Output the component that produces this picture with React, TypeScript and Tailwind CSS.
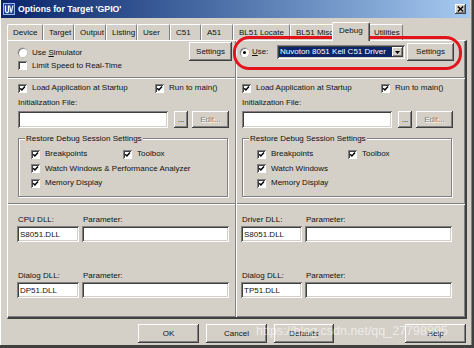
import React from "react";

const raised =
  "bg-[#d4d0c8] shadow-[inset_-1px_-1px_0_#404040,inset_1px_1px_0_#ffffff,inset_-2px_-2px_0_#808080]";
const sunken =
  "bg-white shadow-[inset_1px_1px_0_#808080,inset_-1px_-1px_0_#ffffff,inset_2px_2px_0_#404040,inset_-2px_-2px_0_#d4d0c8]";

function Check({ checked = true }: { checked?: boolean }) {
  return (
    <span className="relative inline-block w-[9px] h-[9px] shrink-0 bg-white shadow-[inset_1px_1px_0_#808080,inset_-1px_-1px_0_#ffffff,inset_2px_2px_0_#404040]">
      {checked && (
        <svg viewBox="0 0 9 9" className="absolute inset-0 w-[9px] h-[9px]">
          <path d="M2.2 4.2 L3.9 6 L7 2.6" stroke="#000" strokeWidth="1.5" fill="none" />
        </svg>
      )}
    </span>
  );
}

function Radio({ on = false }: { on?: boolean }) {
  return (
    <span className="relative inline-flex items-center justify-center w-[9px] h-[9px] shrink-0 rounded-full bg-white shadow-[inset_1px_1px_0_#808080,inset_-1px_-1px_0_#ffffff,0_0_0_0.5px_#b0aca4]">
      {on && <span className="w-[3px] h-[3px] rounded-full bg-black" />}
    </span>
  );
}

function CheckRow({ label, w }: { label: string; w?: string }) {
  return (
    <div className={`flex items-center gap-[5px] h-[12px] ${w ?? ""}`}>
      <Check />
      <span className="whitespace-nowrap">{label}</span>
    </div>
  );
}

function Btn({ children, className = "", disabled = false }: { children: React.ReactNode; className?: string; disabled?: boolean }) {
  return (
    <div className={`flex items-center justify-center shrink-0 ${raised} ${className}`}>
      <span className={disabled ? "text-[#808080] [text-shadow:1px_1px_0_#ffffff]" : ""}>{children}</span>
    </div>
  );
}

function Section2({ pl, runW, groupPl, groupCol, watch }: { pl: string; runW: string; groupPl: string; groupCol: string; watch: string }) {
  return (
    <div className={`h-[124px] flex flex-col ${pl}`}>
      <div className="flex mt-[3px]">
        <CheckRow label="Load Application at Startup" w={runW} />
        <CheckRow label="Run to main()" />
      </div>
      <div className="mt-[3px] h-[12px] flex items-center">Initialization File:</div>
      <div className="mt-[2px] flex h-[17px]">
        <div className={`w-[150px] h-[17px] ${sunken}`} />
        <Btn className="ml-[6px] w-[14px] h-[17px]">...</Btn>
        <Btn className="ml-[4px] w-[37px] h-[17px]" disabled>
          Edit...
        </Btn>
      </div>
      <div className="relative mt-[10px] w-[210px] h-[59px] border border-[#808080] shadow-[inset_1px_1px_0_#ffffff,1px_1px_0_#ffffff]">
        <span className="absolute left-[6px] top-[-6px] px-[1px] bg-[#d4d0c8] leading-[11px] whitespace-nowrap">
          Restore Debug Session Settings
        </span>
        <div className={`flex flex-col ${groupPl} pt-[9px] gap-[2.5px]`}>
          <div className="flex">
            <CheckRow label="Breakpoints" w={groupCol} />
            <CheckRow label="Toolbox" />
          </div>
          <CheckRow label={watch} />
          <CheckRow label="Memory Display" />
        </div>
      </div>
    </div>
  );
}

function Section3({ pl, l1, v1, v2, w1 }: { pl: string; l1: string; v1: string; v2: string; w1: string }) {
  const block = (label: string, val: string, top: string) => (
    <div className={`flex flex-col ${top}`}>
      <div className="flex h-[12px] items-center">
        <span className={`${w1} ml-[1px] mr-[3px]`}>{label}</span>
        <span>Parameter:</span>
      </div>
      <div className="flex h-[16px] gap-[3px]">
        <div className={`${w1} h-[16px] ${sunken} flex items-center pl-[3px] pt-[1px]`}>{val}</div>
        <div className={`w-[147px] h-[16px] ${sunken}`} />
      </div>
    </div>
  );
  return (
    <div className={`flex-1 flex flex-col ${pl}`}>
      {block(l1, v1, "mt-[9px]")}
      {block("Dialog DLL:", v2, "mt-[28px]")}
    </div>
  );
}

const Etch = () => <div className="h-[2px] border-t border-[#808080] border-b border-b-white" />;

export default function App() {
  const tabs: [string, string][] = [
    ["Device", "w-[36px]"],
    ["Target", "w-[31px]"],
    ["Output", "w-[32px]"],
    ["Listing", "w-[31px]"],
    ["User", "w-[33px]"],
    ["C51", "w-[31px]"],
    ["A51", "w-[32px]"],
    ["BL51 Locate", "w-[57px]"],
    ["BL51 Misc", "w-[44px]"],
    ["Debug", "w-[38px]"],
    ["Utilities", "w-[35px]"],
  ];
  return (
    <div className="w-[474px] h-[348px] overflow-hidden relative bg-[#d4d0c8] font-['Liberation_Sans',Arial,sans-serif] text-[8px] text-[#111] leading-none">
      <div className="flex h-[345px]">
        <div className="w-[470px] flex flex-col border-l border-white">
          {/* title bar */}
          <div className="h-[18px] flex items-center bg-gradient-to-r from-[#0a246a] to-[#a6caf0] pl-[2px] pr-[4px]">
            <svg width="12" height="12" viewBox="0 0 12 12" className="shrink-0">
              <rect x="0.5" y="0.5" width="11" height="11" fill="#1c3f9a" stroke="#9bb5e8" />
              <path d="M2.5 2.5 V8 Q2.5 9.5 4.5 9.5 L5 9.5 M5.5 2.5 V9.5" stroke="#ffffff" strokeWidth="1.3" fill="none" />
              <path d="M6.5 2.5 L8.2 9.5 L10 2.5" stroke="#e8eefc" strokeWidth="1.2" fill="none" />
            </svg>
            <span className="ml-[3px] text-white font-bold text-[8.7px] whitespace-nowrap">Options for Target 'GPIO'</span>
            <div className={`ml-auto w-[11px] h-[10px] ${raised} flex items-center justify-center`}>
              <svg width="7" height="6" viewBox="0 0 7 6">
                <path d="M0.8 0.5 L6.2 5.5 M6.2 0.5 L0.8 5.5" stroke="#000" strokeWidth="1.4" />
              </svg>
            </div>
          </div>
          {/* tabs */}
          <div className="h-[22px] flex items-end pl-[6px]">
            {tabs.map(([t, w]) =>
              t === "Debug" ? (
                <div
                  key={t}
                  className={`${w} relative z-10 -mb-[1px] h-[19px] -mx-[2px] bg-[#d4d0c8] border-t border-l border-white border-r border-r-[#404040] shadow-[inset_-1px_0_0_#808080] rounded-t-[2px] flex items-start pt-[4px] pl-[6px]`}
                >
                  {t}
                </div>
              ) : (
                <div
                  key={t}
                  className={`${w} h-[16px] border-t border-l border-white border-r border-r-[#808080] rounded-t-[2px] flex items-center pl-[5px] whitespace-nowrap`}
                >
                  {t}
                </div>
              )
            )}
          </div>
          {/* panel */}
          <div className="ml-[6px] w-[460px] h-[279px] flex border-t border-l border-white border-r-2 border-r-[#404040] border-b-2 border-b-[#404040] shadow-[inset_-1px_-1px_0_#808080]">
            {/* left column */}
            <div className="w-[227px] flex flex-col">
              <div className="h-[36px] flex items-start pl-[10px]">
                <div className="flex flex-col mt-[5px]">
                  <div className="flex items-center gap-[5px] h-[13px]">
                    <Radio />
                    <span>
                      Use <span className="underline">S</span>imulator
                    </span>
                  </div>
                  <div className="flex items-center gap-[5px] h-[13px]">
                    <Check checked={false} />
                    <span>Limit Speed to Real-Time</span>
                  </div>
                </div>
                <Btn className="ml-auto mr-[3px] mt-[1px] w-[43px] h-[19px]">Settings</Btn>
              </div>
              <Etch />
              <Section2 pl="pl-[10px]" runW="w-[137px]" groupPl="pl-[12px]" groupCol="w-[92px]" watch="Watch Windows & Performance Analyzer" />
              <Etch />
              <Section3 pl="pl-[9px]" l1="CPU DLL:" v1="S8051.DLL" v2="DP51.DLL" w1="w-[62px]" />
            </div>
            {/* divider */}
            <div className="w-[2px] border-l border-[#808080] border-r border-r-white" />
            {/* right column */}
            <div className="flex-1 flex flex-col">
              <div className="h-[36px] flex items-start pl-[3px] pt-[2px]">
                <div className="w-[37px] h-[18px] flex items-center gap-[3px]">
                  <Radio on />
                  <span>
                    <span className="underline">U</span>se:
                  </span>
                </div>
                <div className={`mt-[2px] w-[128px] h-[14px] ${sunken} flex items-center p-[2px]`}>
                  <div className="flex-1 h-[10px] bg-[#0a246a] text-white flex items-center pl-[1px] whitespace-nowrap overflow-hidden">
                    Nuvoton 8051 Keil C51 Driver
                  </div>
                  <div className={`w-[11px] h-[10px] ${raised} flex items-center justify-center`}>
                    <svg width="5" height="3" viewBox="0 0 5 3">
                      <path d="M0 0 H5 L2.5 3 Z" fill="#000" />
                    </svg>
                  </div>
                </div>
                <Btn className="ml-[2px] w-[47px] h-[18px]">Settings</Btn>
              </div>
              <Etch />
              <Section2 pl="pl-[5px]" runW="w-[139px]" groupPl="pl-[14px]" groupCol="w-[91px]" watch="Watch Windows" />
              <Etch />
              <Section3 pl="pl-[4px]" l1="Driver DLL:" v1="S8051.DLL" v2="TP51.DLL" w1="w-[61px]" />
            </div>
          </div>
          {/* buttons */}
          <div className="flex mt-[5px] pl-[137px] gap-[7px] pr-[4px]">
            <Btn className="w-[61px] h-[19px]">OK</Btn>
            <Btn className="w-[61px] h-[19px]">Cancel</Btn>
            <Btn className="w-[60px] h-[19px]">Defaults</Btn>
            <Btn className="ml-auto w-[61px] h-[19px]">Help</Btn>
          </div>
        </div>
        <div className="w-[4px] flex">
          <div className="w-[1px] bg-[#d4d0c8]" />
          <div className="w-[1px] bg-[#808080]" />
          <div className="w-[2px] bg-[#404040]" />
        </div>
      </div>
      <div className="h-[3px] bg-[#404040]" />
      {/* red annotation */}
      <div className="absolute left-[233px] top-[36px] w-[229px] h-[34px] border-[3px] border-[#e3141c] rounded-[16px]" />
      {/* watermark */}
      <div className="absolute left-[256px] top-[325px] text-[12.5px] text-white/60 whitespace-nowrap">
        https://blog.csdn.net/qq_27798895
      </div>
    </div>
  );
}
